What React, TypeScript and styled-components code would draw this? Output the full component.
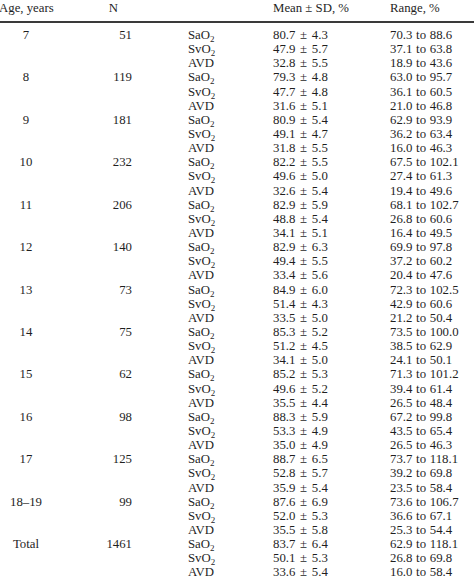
import React from "react";
import styled, { createGlobalStyle } from "styled-components";

const GlobalStyle = createGlobalStyle`
  html, body { margin: 0; padding: 0; background: #ffffff; }
  body {
    font-family: "Liberation Serif", "Times New Roman", serif;
    color: #1f1f1f;
    font-size: 12.8px;
  }
`;

const COLS = "52px 80px 141px 117px 1fr";

const Table = styled.div`
  width: 474px;
  overflow: hidden;
`;

const HeaderRow = styled.div`
  display: grid;
  grid-template-columns: ${COLS};
  height: 21px;
  line-height: 16px;
  border-bottom: 2px solid #3a3a3a;
`;

const HeadCell = styled.div<{ $align?: string; $shift?: number }>`
  text-align: ${(p) => p.$align || "left"};
  padding-right: ${(p) => (p.$align === "right" ? 14 : 0)}px;
  margin-left: ${(p) => p.$shift || 0}px;
  white-space: nowrap;
`;

const Body = styled.div`
  padding-top: 5px;
`;

const Row = styled.div`
  display: grid;
  grid-template-columns: ${COLS};
  height: 14.15px;
  line-height: 14.15px;
  white-space: nowrap;
`;

const AgeCell = styled.div`
  text-align: center;
`;

const NCell = styled.div`
  text-align: right;
`;

const LabelCell = styled.div`
  padding-left: 56px;
`;

const MeanCell = styled.div`
  word-spacing: 1.5px;
`;

const RangeCell = styled.div`
  word-spacing: 0.5px;
`;

const Sub = styled.sub`
  font-size: 70%;
  vertical-align: -2.5px;
  line-height: 0;
`;

type Line = [string, string, string];
type Group = { age: string; n: string; lines: Line[] };

const data: Group[] = [
  { age: "7", n: "51", lines: [["SaO", "80.7 ± 4.3", "70.3 to 88.6"], ["SvO", "47.9 ± 5.7", "37.1 to 63.8"], ["AVD", "32.8 ± 5.5", "18.9 to 43.6"]] },
  { age: "8", n: "119", lines: [["SaO", "79.3 ± 4.8", "63.0 to 95.7"], ["SvO", "47.7 ± 4.8", "36.1 to 60.5"], ["AVD", "31.6 ± 5.1", "21.0 to 46.8"]] },
  { age: "9", n: "181", lines: [["SaO", "80.9 ± 5.4", "62.9 to 93.9"], ["SvO", "49.1 ± 4.7", "36.2 to 63.4"], ["AVD", "31.8 ± 5.5", "16.0 to 46.3"]] },
  { age: "10", n: "232", lines: [["SaO", "82.2 ± 5.5", "67.5 to 102.1"], ["SvO", "49.6 ± 5.0", "27.4 to 61.3"], ["AVD", "32.6 ± 5.4", "19.4 to 49.6"]] },
  { age: "11", n: "206", lines: [["SaO", "82.9 ± 5.9", "68.1 to 102.7"], ["SvO", "48.8 ± 5.4", "26.8 to 60.6"], ["AVD", "34.1 ± 5.1", "16.4 to 49.5"]] },
  { age: "12", n: "140", lines: [["SaO", "82.9 ± 6.3", "69.9 to 97.8"], ["SvO", "49.4 ± 5.5", "37.2 to 60.2"], ["AVD", "33.4 ± 5.6", "20.4 to 47.6"]] },
  { age: "13", n: "73", lines: [["SaO", "84.9 ± 6.0", "72.3 to 102.5"], ["SvO", "51.4 ± 4.3", "42.9 to 60.6"], ["AVD", "33.5 ± 5.0", "21.2 to 50.4"]] },
  { age: "14", n: "75", lines: [["SaO", "85.3 ± 5.2", "73.5 to 100.0"], ["SvO", "51.2 ± 4.5", "38.5 to 62.9"], ["AVD", "34.1 ± 5.0", "24.1 to 50.1"]] },
  { age: "15", n: "62", lines: [["SaO", "85.2 ± 5.3", "71.3 to 101.2"], ["SvO", "49.6 ± 5.2", "39.4 to 61.4"], ["AVD", "35.5 ± 4.4", "26.5 to 48.4"]] },
  { age: "16", n: "98", lines: [["SaO", "88.3 ± 5.9", "67.2 to 99.8"], ["SvO", "53.3 ± 4.9", "43.5 to 65.4"], ["AVD", "35.0 ± 4.9", "26.5 to 46.3"]] },
  { age: "17", n: "125", lines: [["SaO", "88.7 ± 6.5", "73.7 to 118.1"], ["SvO", "52.8 ± 5.7", "39.2 to 69.8"], ["AVD", "35.9 ± 5.4", "23.5 to 58.4"]] },
  { age: "18–19", n: "99", lines: [["SaO", "87.6 ± 6.9", "73.6 to 106.7"], ["SvO", "52.0 ± 5.3", "36.6 to 67.1"], ["AVD", "35.5 ± 5.8", "25.3 to 54.4"]] },
  { age: "Total", n: "1461", lines: [["SaO", "83.7 ± 6.4", "62.9 to 118.1"], ["SvO", "50.1 ± 5.3", "26.8 to 69.8"], ["AVD", "33.6 ± 5.4", "16.0 to 58.4"]] },
];

export default function App() {
  return (
    <>
      <GlobalStyle />
      <Table>
        <HeaderRow>
          <HeadCell $shift={-1}>Age, years</HeadCell>
          <HeadCell $align="right">N</HeadCell>
          <HeadCell />
          <HeadCell>Mean ± SD, %</HeadCell>
          <HeadCell>Range, %</HeadCell>
        </HeaderRow>
        <Body>
          {data.map((g) =>
            g.lines.map((l, i) => (
              <Row key={g.age + i}>
                <AgeCell>{i === 0 ? g.age : ""}</AgeCell>
                <NCell>{i === 0 ? g.n : ""}</NCell>
                <LabelCell>
                  {l[0]}
                  {l[0] !== "AVD" && <Sub>2</Sub>}
                </LabelCell>
                <MeanCell>{l[1]}</MeanCell>
                <RangeCell>{l[2]}</RangeCell>
              </Row>
            ))
          )}
        </Body>
      </Table>
    </>
  );
}
